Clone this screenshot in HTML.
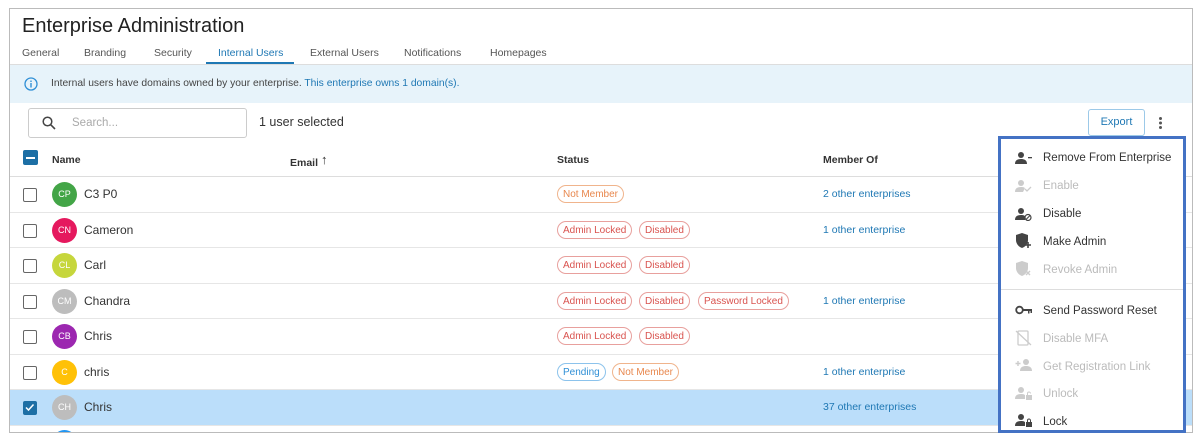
<!DOCTYPE html>
<html><head><style>
*{box-sizing:border-box;margin:0;padding:0}
body{width:1201px;height:438px;background:#fff;font-family:"Liberation Sans",sans-serif;position:relative;overflow:hidden;color:#333}
.frame{position:absolute;left:9px;top:8px;width:1184px;height:425px;border:1px solid #bbb;overflow:hidden}
.abs{position:absolute}
h1{position:absolute;left:12px;top:6px;font-size:20px;font-weight:normal;color:#222}
.tab{position:absolute;top:38px;font-size:10.5px;color:#555}
.info{position:absolute;left:0;top:56px;width:100%;height:38px;background:#e7f3fa;font-size:10.3px;color:#444}
.row{position:absolute;left:0;width:100%;height:35.5px;border-bottom:1px solid #e6e6e6}
.cb{position:absolute;left:13px;width:14px;height:14px;border:1.5px solid #666;border-radius:2px}
.av{position:absolute;left:42px;width:25px;height:25px;border-radius:50%;color:#fff;font-size:9px;text-align:center;line-height:25px}
.nm{position:absolute;left:74px;font-size:12px;color:#333}
.tag{position:absolute;height:18px;border:1px solid;border-radius:9px;font-size:10px;padding:2px 5px 0;line-height:14px}
.red{color:#d9534f;border-color:#e8a09d}
.org{color:#e8874d;border-color:#f0b48c}
.blu{color:#2f8fd6;border-color:#8cc3ec}
.mem{position:absolute;left:813px;font-size:10.5px;color:#1f78b4}
.th{position:absolute;top:145px;font-size:10.5px;font-weight:bold;color:#333}
.menu{position:absolute;left:998px;top:136px;width:188px;height:297px;border:3px solid #4472c4;background:#fff}
.mi{position:absolute;left:42px;font-size:11.5px;color:#333}
.dis{color:#bbb}
.ic{position:absolute;left:14px;width:18px;height:14px}
</style></head><body>
<div class="frame">
<h1>Enterprise Administration</h1>
<div class="tab" style="left:12px">General</div>
<div class="tab" style="left:74px">Branding</div>
<div class="tab" style="left:144px">Security</div>
<div class="tab" style="left:208px;color:#1f78b4">Internal Users</div>
<div class="abs" style="left:196px;top:53px;width:88px;height:2px;background:#1f78b4"></div>
<div class="tab" style="left:300px">External Users</div>
<div class="tab" style="left:394px">Notifications</div>
<div class="tab" style="left:480px">Homepages</div>
<div class="abs" style="left:0;top:55px;width:100%;height:1px;background:#ddd"></div>
<div class="info">
<svg class="abs" style="left:14px;top:12px" width="14" height="14" viewBox="0 0 14 14"><circle cx="7" cy="7" r="6" fill="none" stroke="#2f8fd6" stroke-width="1.3"/><rect x="6.3" y="6" width="1.4" height="4.5" fill="#2f8fd6"/><circle cx="7" cy="4.2" r=".8" fill="#2f8fd6"/></svg>
<span class="abs" style="left:41px;top:13px">Internal users have domains owned by your enterprise. <span style="color:#1f78b4">This enterprise owns 1 domain(s).</span></span>
</div>
<div class="abs" style="left:18px;top:99px;width:219px;height:30px;border:1px solid #ccc;border-radius:3px">
<svg class="abs" style="left:13px;top:7px" width="14" height="14" viewBox="0 0 14 14"><circle cx="5.5" cy="5.5" r="4.3" fill="none" stroke="#444" stroke-width="1.5"/><path d="M8.7 8.7L13 13" stroke="#444" stroke-width="1.6"/></svg>
<span class="abs" style="left:43px;top:8px;font-size:11.5px;color:#aaa">Search...</span></div>
<div class="abs" style="left:249px;top:106px;font-size:12.5px;color:#333">1 user selected</div>
<div class="abs" style="left:1078px;top:100px;width:57px;height:27px;border:1px solid #9cc9e8;border-radius:3px;font-size:11px;color:#1f78b4;text-align:center;line-height:25px">Export</div>
<div class="abs" style="left:1149px;top:108px;width:3px;height:3px;background:#555;border-radius:50%;box-shadow:0 4.5px 0 #555,0 9px 0 #555"></div>
<div class="abs" style="left:13px;top:141px;width:15px;height:15px;background:#1d6fa5;border-radius:2px"><div style="position:absolute;left:3px;top:6.5px;width:9px;height:2px;background:#fff"></div></div>
<div class="th" style="left:42px">Name</div>
<div class="th" style="left:280px">Email <span style="font-weight:normal;font-size:13px;position:relative;top:-2px">↑</span></div>
<div class="th" style="left:547px">Status</div>
<div class="th" style="left:813px">Member Of</div>
<div class="abs" style="left:0;top:167px;width:100%;height:1px;background:#ddd"></div>

<div class="row" style="top:168px"><div class="cb" style="top:11px"></div><div class="av" style="top:5px;background:#43a547">CP</div><div class="nm" style="top:10px">C3 P0</div><div class="tag org" style="left:547px;top:8px">Not Member</div><div class="mem" style="top:11px">2 other enterprises</div></div>
<div class="row" style="top:203.5px"><div class="cb" style="top:11px"></div><div class="av" style="top:5px;background:#e5195e">CN</div><div class="nm" style="top:10px">Cameron</div><div class="tag red" style="left:547px;top:8px">Admin Locked</div><div class="tag red" style="left:629px;top:8px">Disabled</div><div class="mem" style="top:11px">1 other enterprise</div></div>
<div class="row" style="top:239px"><div class="cb" style="top:11px"></div><div class="av" style="top:5px;background:#c6d63c">CL</div><div class="nm" style="top:10px">Carl</div><div class="tag red" style="left:547px;top:8px">Admin Locked</div><div class="tag red" style="left:629px;top:8px">Disabled</div></div>
<div class="row" style="top:274.5px"><div class="cb" style="top:11px"></div><div class="av" style="top:5px;background:#bdbdbd">CM</div><div class="nm" style="top:10px">Chandra</div><div class="tag red" style="left:547px;top:8px">Admin Locked</div><div class="tag red" style="left:629px;top:8px">Disabled</div><div class="tag red" style="left:688px;top:8px">Password Locked</div><div class="mem" style="top:11px">1 other enterprise</div></div>
<div class="row" style="top:310px"><div class="cb" style="top:11px"></div><div class="av" style="top:5px;background:#9c27b0">CB</div><div class="nm" style="top:10px">Chris</div><div class="tag red" style="left:547px;top:8px">Admin Locked</div><div class="tag red" style="left:629px;top:8px">Disabled</div></div>
<div class="row" style="top:345.5px"><div class="cb" style="top:11px"></div><div class="av" style="top:5px;background:#ffc107">C</div><div class="nm" style="top:10px">chris</div><div class="tag blu" style="left:547px;top:8px">Pending</div><div class="tag org" style="left:602px;top:8px">Not Member</div><div class="mem" style="top:11px">1 other enterprise</div></div>
<div class="row" style="top:381px;background:#bbdefa"><div class="cb" style="top:11px;background:#1d6fa5;border-color:#1d6fa5"><svg width="11" height="11" viewBox="0 0 11 11" style="position:absolute;left:0;top:0"><path d="M2 5.5L4.5 8L9.5 2.5" stroke="#fff" stroke-width="1.5" fill="none"/></svg></div><div class="av" style="top:5px;background:#bdbdbd">CH</div><div class="nm" style="top:10px">Chris</div><div class="mem" style="top:11px">37 other enterprises</div></div>
<div class="av" style="top:421px;background:#2196f3"></div>
</div>

<div class="menu">
<svg class="ic" style="top:12px" viewBox="0 0 18 14"><circle cx="6" cy="4" r="3" fill="#444"/><path d="M0 13c0-4 3-5 6-5s6 1 6 5z" fill="#444"/><rect x="13" y="6" width="4" height="1.3" fill="#444"/></svg><div class="mi" style="top:13px">Remove From Enterprise</div>
<svg class="ic" style="top:40px" viewBox="0 0 18 14"><circle cx="6" cy="4" r="3" fill="#ccc"/><path d="M0 13c0-4 3-5 6-5s3 .5 4 1l-2 4z" fill="#ccc"/><path d="M10 10l2 2 4-4" stroke="#ccc" stroke-width="1.3" fill="none"/></svg><div class="mi dis" style="top:41px">Enable</div>
<svg class="ic" style="top:68px" viewBox="0 0 18 14"><circle cx="6" cy="4" r="3" fill="#444"/><path d="M0 13c0-4 3-5 6-5s3 .5 4 1v4z" fill="#444"/><circle cx="13" cy="10.5" r="3" fill="none" stroke="#444" stroke-width="1.2"/><path d="M11 12.5l4-4" stroke="#444" stroke-width="1.1"/></svg><div class="mi" style="top:69px">Disable</div>
<svg class="ic" style="top:94px;height:16px" viewBox="0 0 18 16"><path d="M1 2l6-2 6 2v5c0 4-3 7-6 8-3-1-6-4-6-8z" fill="#444"/><path d="M13 9v6M10 12h6" stroke="#444" stroke-width="1.6"/></svg><div class="mi" style="top:97px">Make Admin</div>
<svg class="ic" style="top:122px;height:16px" viewBox="0 0 18 16"><path d="M1 2l6-2 6 2v5c0 4-3 7-6 8-3-1-6-4-6-8z" fill="#ccc"/><path d="M11 10l4 4M15 10l-4 4" stroke="#ccc" stroke-width="1.4"/></svg><div class="mi dis" style="top:125px">Revoke Admin</div>
<div class="abs" style="left:0;top:150px;width:100%;height:1px;background:#ddd"></div>
<svg class="ic" style="top:164px" viewBox="0 0 18 14"><circle cx="4.5" cy="7" r="3.3" fill="none" stroke="#444" stroke-width="1.8"/><path d="M8 6h9v2H8zM13 8h1.5v2.5H13zM15.5 8H17v2h-1.5z" fill="#444"/></svg><div class="mi" style="top:166px">Send Password Reset</div>
<svg class="ic" style="top:191px;height:16px" viewBox="0 0 18 16"><rect x="3" y="1" width="10" height="14" rx="1" fill="none" stroke="#ccc" stroke-width="1.3"/><path d="M1 1l15 14" stroke="#ccc" stroke-width="1.3"/></svg><div class="mi dis" style="top:194px">Disable MFA</div>
<svg class="ic" style="top:219px" viewBox="0 0 18 14"><path d="M3 3v5M0.5 5.5h5" stroke="#ccc" stroke-width="1.4"/><circle cx="11" cy="4" r="3" fill="#ccc"/><path d="M5 13c0-4 3-5 6-5s6 1 6 5z" fill="#ccc"/></svg><div class="mi dis" style="top:222px">Get Registration Link</div>
<svg class="ic" style="top:247px" viewBox="0 0 18 14"><circle cx="6" cy="4" r="3" fill="#ccc"/><path d="M0 13c0-4 3-5 6-5s3 .5 4 1v4z" fill="#ccc"/><rect x="11" y="9" width="6" height="5" fill="#ccc"/><path d="M12.5 9V7.5a1.5 1.5 0 013 0" stroke="#ccc" fill="none"/></svg><div class="mi dis" style="top:249px">Unlock</div>
<svg class="ic" style="top:274px" viewBox="0 0 18 14"><circle cx="6" cy="4" r="3" fill="#444"/><path d="M0 13c0-4 3-5 6-5s3 .5 4 1v4z" fill="#444"/><rect x="11" y="9" width="6" height="5" fill="#444"/><path d="M12.5 9V7.5a1.5 1.5 0 013 0V9" stroke="#444" fill="none"/></svg><div class="mi" style="top:277px">Lock</div>
</div>
</body></html>
